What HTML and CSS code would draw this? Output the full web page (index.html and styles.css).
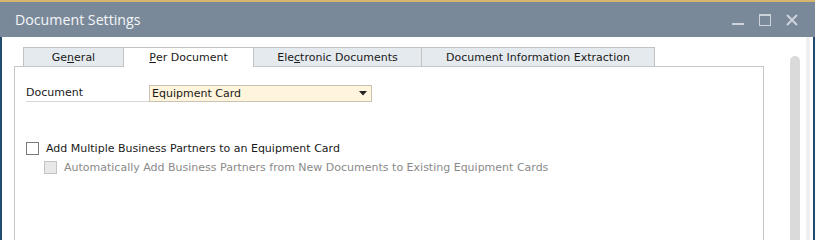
FILE: index.html
```html
<!DOCTYPE html>
<html lang="en">
  <head>
    <meta charset="UTF-8" />
    <title>Document Settings</title>
    <link rel="stylesheet" href="styles.css">
  </head>
  <body>
    <div class="window">
      <div class="titlebar">
        <span class="title">Document Settings</span>
        <div class="controls">
          <svg class="ctl" width="14" height="14" viewBox="0 0 14 14"><rect x="1" y="10" width="12" height="2" fill="#cdd3da"/></svg>
          <svg class="ctl" width="14" height="14" viewBox="0 0 14 14"><rect x="1.5" y="1.5" width="11" height="11" fill="none" stroke="#cdd3da" stroke-width="1"/><rect x="1" y="1" width="12" height="2" fill="#cdd3da"/></svg>
          <svg class="ctl" width="14" height="14" viewBox="0 0 14 14"><path d="M2 2 L12 12 M12 2 L2 12" stroke="#cdd3da" stroke-width="2"/></svg>
        </div>
      </div>
      <div class="frame">
        <div class="edge"></div>
        <div class="main">
          <div class="tabs">
            <div class="tab">Ge<u>n</u>eral</div>
            <div class="tab active"><u>P</u>er Document</div>
            <div class="tab">Ele<u>c</u>tronic Documents</div>
            <div class="tab">Document Information Extraction</div>
          </div>
          <div class="panel">
            <div class="field">
              <span class="label">Document</span>
              <div class="combo">
                <span>Equipment Card</span>
                <svg width="8" height="5" viewBox="0 0 8 5"><path d="M0 0 H8 L4 4.5 Z" fill="#222"/></svg>
              </div>
            </div>
            <label class="check">
              <span class="box"></span>
              <span>Add Multiple Business Partners to an Equipment Card</span>
            </label>
            <label class="check sub disabled">
              <span class="box"></span>
              <span>Automatically Add Business Partners from New Documents to Existing Equipment Cards</span>
            </label>
          </div>
        </div>
        <div class="scroll">
          <div class="thumb"></div>
        </div>
        <div class="track"></div>
        <div class="edge"></div>
      </div>
    </div>
  </body>
</html>
```

FILE: styles.css
```css
* {
  box-sizing: border-box;
}
html,
body {
  margin: 0;
  height: 100%;
  overflow: hidden;
}
body {
  font-family: "DejaVu Sans", sans-serif;
  font-size: 11px;
  color: #1a1a1a;
  background: #fff;
}
.window {
  height: 100%;
  display: flex;
  flex-direction: column;
  border-top: 2px solid #d8b46c;
}
.titlebar {
  height: 35px;
  background: #7a8999;
  display: flex;
  align-items: center;
  justify-content: space-between;
  padding-left: 15px;
  flex-shrink: 0;
}
.title {
  font-family: "Open Sans", sans-serif;
  font-size: 14.2px;
  color: #f4f6f8;
}
.controls {
  display: flex;
  gap: 13px;
  padding-right: 16px;
}
.frame {
  flex-grow: 1;
  display: flex;
}
.edge {
  width: 2px;
  background: #234b70;
}
.main {
  flex-grow: 1;
  padding: 10px 0 0 12px;
  display: flex;
  flex-direction: column;
}
.tabs {
  display: flex;
  padding-left: 9px;
  height: 20px;
}
.tab {
  background: #e5eaef;
  border: 1px solid #c2c2c2;
  border-bottom: none;
  margin-right: -1px;
  display: flex;
  align-items: center;
  justify-content: center;
  height: 19px;
}
.tab:nth-child(1) { width: 101px; }
.tab:nth-child(2) { width: 131px; }
.tab:nth-child(3) { width: 169px; }
.tab:nth-child(4) { width: 234px; }
.tab.active {
  background: #fff;
  position: relative;
  z-index: 1;
  height: 20px;
}
.panel {
  flex-grow: 1;
  width: 750px;
  margin-top: -1px;
  border: 1px solid #c6c6c6;
  border-bottom: none;
  padding: 17px 0 0 11px;
}
.field {
  display: flex;
  align-items: center;
}
.label {
  width: 123px;
  height: 18px;
  line-height: 17px;
  border-bottom: 1px solid #d6d6d6;
}
.combo {
  width: 223px;
  height: 17px;
  background: #fff4dc;
  border: 1px solid #c9c2b2;
  display: flex;
  align-items: center;
  justify-content: space-between;
  padding: 0 4px 0 2px;
}
.check {
  display: flex;
  align-items: center;
  gap: 7px;
  height: 17px;
}
.field + .check {
  margin-top: 38px;
}
.box {
  width: 13px;
  height: 13px;
  border: 1px solid #7a7a7a;
  background: #fff;
}
.sub {
  margin-left: 18px;
  margin-top: 2px;
}
.disabled {
  color: #8a8a8a;
}
.disabled .box {
  border-color: #c4c4c4;
  background: #e8e8e8;
}
.scroll {
  width: 10px;
  margin-right: 6px;
  padding-top: 19px;
  display: flex;
}
.thumb {
  width: 10px;
  background: #dadada;
  border-radius: 5px 5px 0 0;
}
.track {
  width: 4px;
  background: #f0f0f0;
  margin-right: 3px;
}
```
